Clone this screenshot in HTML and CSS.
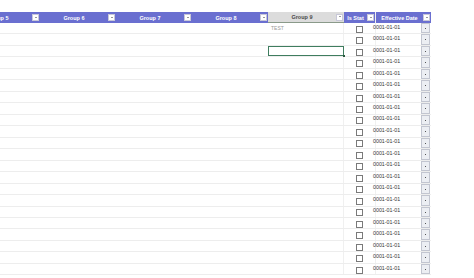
FILE: index.html
```html
<!DOCTYPE html>
<html>
<head>
<meta charset="utf-8">
<link rel="stylesheet" href="styles.css">
</head>
<body>
<div class="grid">
  <div class="hrow">
    <div class="hc g"><span class="ht">Group 5</span><span class="dd"></span></div>
    <div class="hc g"><span class="ht">Group 6</span><span class="dd"></span></div>
    <div class="hc g"><span class="ht">Group 7</span><span class="dd"></span></div>
    <div class="hc g"><span class="ht">Group 8</span><span class="dd"></span></div>
    <div class="hc g sel"><span class="ht">Group 9</span><span class="dd"></span></div>
    <div class="hc st"><span class="ht">Is Stat</span><span class="dd"></span></div>
    <div class="hc dt"><span class="ht">Effective Date</span><span class="dd"></span></div>
  </div>
  <div id="rows"></div>
</div>
<script src="app.js"></script>
</body>
</html>
```

FILE: app.js
```js
var rows = document.getElementById('rows');
var html = '';
for (var i = 0; i < 22; i++) {
  var g9 = '';
  var cls = 'c g g9';
  if (i === 0) g9 = '<span class="test">TEST</span>';
  if (i === 2) { cls += ' edit'; g9 = '<span class="handle"></span>'; }
  html += '<div class="row">' +
    '<div class="c g"></div><div class="c g"></div><div class="c g"></div><div class="c g"></div>' +
    '<div class="' + cls + '">' + g9 + '</div>' +
    '<div class="c st"><span class="cb"></span></div>' +
    '<div class="c dt"><span class="date">0001-01-01</span><span class="pick"></span></div>' +
    '</div>';
}
rows.innerHTML = html;
```

FILE: styles.css
```css
html, body {
  margin: 0;
  padding: 0;
  background: #ffffff;
  overflow: hidden;
}
body {
  width: 474px;
  height: 278px;
  font-family: "Liberation Sans", Arial, sans-serif;
}
.grid {
  margin-top: 12px;
  margin-left: -36px;
  width: 467px;
}
.hrow {
  display: flex;
  height: 11px;
}
.hc {
  display: flex;
  align-items: center;
  box-sizing: border-box;
  background: #6a6fd0;
  color: #ffffff;
  font-size: 5.5px;
  font-weight: bold;
  padding-right: 1px;
}
.hc .ht {
  flex: 1;
  text-align: center;
  white-space: nowrap;
}
.g { width: 76px; flex: none; }
.st { width: 32px; flex: none; }
.dt { width: 55px; flex: none; }
.hc.sel {
  background: #dcdcdc;
  color: #4a4a4a;
  border-bottom: 1px solid #8a9a8a;
}
.dd {
  width: 7px;
  height: 7px;
  box-sizing: border-box;
  background: #ffffff;
  border: 1px solid #c8c8d8;
  position: relative;
  flex: none;
}
.dd::after {
  content: "";
  position: absolute;
  left: 1.5px;
  top: 1.5px;
  border-left: 1px solid transparent;
  border-right: 1px solid transparent;
  border-top: 1.5px solid #333;
}
.row {
  display: flex;
  height: 11.47px;
  box-sizing: border-box;
  border-bottom: 1px solid #ededed;
}
.c {
  box-sizing: border-box;
  display: flex;
  align-items: center;
  position: relative;
}
.g9 { border-right: 1px solid #f0f0f0; }
.test {
  font-size: 5px;
  color: #999999;
  margin-left: 3px;
  margin-top: -1px;
}
.edit {
  border: 1px solid #3f7d5f;
}
.handle {
  position: absolute;
  right: -2px;
  bottom: -2px;
  width: 2px;
  height: 2px;
  background: #2c5a40;
}
.st {
  justify-content: center;
  border-right: 1px solid #f0f0f0;
}
.cb {
  width: 7px;
  height: 7px;
  box-sizing: border-box;
  border: 1px solid #7a7a7a;
  background: #fff;
  margin-top: 2px;
}
.c.dt {
  justify-content: space-between;
}
.date {
  font-size: 5.3px;
  color: #333333;
  margin-left: -3px;
  margin-top: -3px;
}
.pick {
  width: 9px;
  height: 100%;
  box-sizing: border-box;
  background: #eceef3;
  border: 1px solid #c2c5d0;
  position: relative;
  margin-right: 1px;
}
.pick::after {
  content: "";
  position: absolute;
  left: 3px;
  top: 4px;
  width: 1px;
  height: 1px;
  background: #555;
}
```
